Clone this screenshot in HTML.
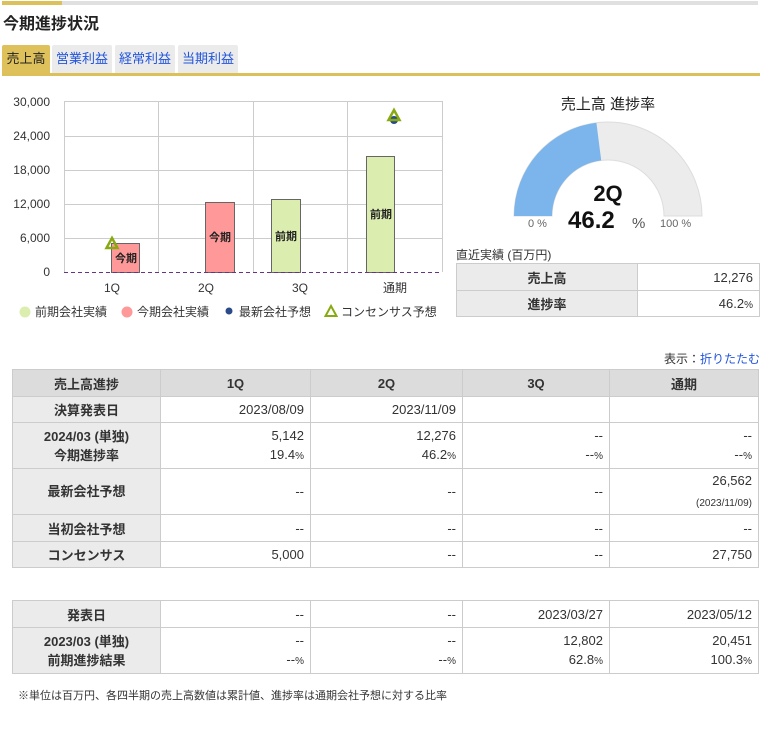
<!DOCTYPE html>
<html><head><meta charset="utf-8"><style>
body{margin:0;width:770px;height:736px;background:#fff;font-family:"Liberation Sans","Noto Sans CJK JP",sans-serif;color:#333;position:relative;overflow:hidden}
.a{position:absolute}
.tab{position:absolute;top:45px;height:28px;line-height:28px;font-size:13px;text-align:center;background:#ebebeb;color:#2255dd;border-radius:2px 2px 0 0}
table{border-collapse:collapse;position:absolute;font-size:13px}
td{border:1px solid #ccc;padding:0 6px;text-align:right;color:#333}
td.h{background:#ebebeb;text-align:center;font-weight:bold}
tr.hd td{background:#dcdcdc;text-align:center;font-weight:bold}
small{font-size:10px}
</style></head><body>
<div class="a" style="left:2px;top:1px;width:60px;height:4px;background:#dcc05a"></div>
<div class="a" style="left:62px;top:1px;width:696px;height:4px;background:#e0e0e0"></div>
<div class="a" style="left:3px;top:10px;font-size:16px;font-weight:bold;color:#222">今期進捗状況</div>
<div class="tab" style="left:2px;width:48px;background:#dfc15c;color:#222">売上高</div>
<div class="tab" style="left:52px;width:60px">営業利益</div>
<div class="tab" style="left:115px;width:60px">経常利益</div>
<div class="tab" style="left:178px;width:60px">当期利益</div>
<div class="a" style="left:2px;top:73px;width:758px;height:3px;background:#dcc05a"></div>

<svg class="a" style="left:0;top:0" width="450" height="330" font-family="Liberation Sans, Noto Sans CJK JP, sans-serif">
<g stroke="#ccc" stroke-width="1">
<line x1="64" y1="101.5" x2="442" y2="101.5"/><line x1="64" y1="136.5" x2="442" y2="136.5"/><line x1="64" y1="170.5" x2="442" y2="170.5"/><line x1="64" y1="204.5" x2="442" y2="204.5"/><line x1="64" y1="238.5" x2="442" y2="238.5"/>
<line x1="64.5" y1="101" x2="64.5" y2="272"/><line x1="158.5" y1="101" x2="158.5" y2="272"/><line x1="253.5" y1="101" x2="253.5" y2="272"/><line x1="347.5" y1="101" x2="347.5" y2="272"/><line x1="442.5" y1="101" x2="442.5" y2="272"/>
</g>
<g font-size="12" fill="#333" text-anchor="end">
<text x="50" y="106">30,000</text><text x="50" y="140">24,000</text><text x="50" y="174">18,000</text><text x="50" y="208">12,000</text><text x="50" y="242">6,000</text><text x="50" y="276">0</text>
</g>
<g stroke="#666" stroke-width="1">
<rect x="111.5" y="243.5" width="28" height="29" fill="#ff9999"/>
<rect x="205.5" y="202.5" width="29" height="70" fill="#ff9999"/>
<rect x="271.5" y="199.5" width="29" height="73" fill="#dcedb0"/>
<rect x="366.5" y="156.5" width="28" height="116" fill="#dcedb0"/>
</g>
<line x1="64" y1="272.5" x2="442" y2="272.5" stroke="#663388" stroke-dasharray="4,3"/>
<g font-size="11" font-weight="bold" fill="#222" text-anchor="middle">
<text x="126" y="262">今期</text><text x="220" y="241">今期</text><text x="286" y="240">前期</text><text x="381" y="218">前期</text>
</g>
<circle cx="394" cy="120" r="4" fill="#2a4a88"/>
<polygon points="112,238 106.5,248 117.5,248" fill="none" stroke="#88aa11" stroke-width="2.5"/>
<polygon points="394,110 388.5,120 399.5,120" fill="none" stroke="#88aa11" stroke-width="2.5"/>
<g font-size="12" fill="#333" text-anchor="middle">
<text x="112" y="292">1Q</text><text x="206" y="292">2Q</text><text x="300" y="292">3Q</text><text x="395" y="292">通期</text>
</g>
<g font-size="12" fill="#333">
<circle cx="25" cy="312" r="5.5" fill="#dcedb0"/><text x="35" y="316">前期会社実績</text>
<circle cx="127" cy="312" r="5.5" fill="#ff9999"/><text x="137" y="316">今期会社実績</text>
<circle cx="229" cy="311" r="3.5" fill="#2a4a88"/><text x="239" y="316">最新会社予想</text>
<polygon points="331,306 325.5,316 336.5,316" fill="none" stroke="#88aa11" stroke-width="2"/><text x="341" y="316">コンセンサス予想</text>
</g>
</svg>

<svg class="a" style="left:450px;top:80px" width="320" height="150" font-family="Liberation Sans, Noto Sans CJK JP, sans-serif">
<text x="158" y="29" font-size="15" text-anchor="middle" fill="#222">売上高 進捗率</text>
<path d="M64,136 A94,94 0 0 1 252,136 L214,136 A56,56 0 0 0 102,136 Z" fill="#ececec" stroke="#ddd"/>
<path d="M64,136 A94,94 0 0 1 146.4,42.7 L151.2,80.4 A56,56 0 0 0 102,136 Z" fill="#7cb4ec"/>
<text x="158" y="121" font-size="22" font-weight="bold" text-anchor="middle" fill="#111">2Q</text>
<text x="118" y="148" font-size="24" font-weight="bold" fill="#111">46.2</text>
<text x="182" y="148" font-size="15" fill="#555">%</text>
<text x="78" y="147" font-size="11" fill="#666">0 %</text>
<text x="210" y="147" font-size="11" fill="#666">100 %</text>
</svg>
<div class="a" style="left:456px;top:246px;font-size:12px">直近実績 (百万円)</div>
<table style="left:456px;top:263px;width:304px">
<tr style="height:27px"><td class="h" style="width:168px">売上高</td><td>12,276</td></tr>
<tr style="height:26px"><td class="h">進捗率</td><td>46.2<small>%</small></td></tr>
</table>
<div class="a" style="right:10px;top:350px;font-size:12px">表示：<span style="color:#2255dd">折りたたむ</span></div>

<table style="left:12px;top:369px;width:747px">
<tr class="hd" style="height:27px"><td style="width:135px">売上高進捗</td><td style="width:137px">1Q</td><td style="width:139px">2Q</td><td style="width:134px">3Q</td><td>通期</td></tr>
<tr style="height:26px"><td class="h">決算発表日</td><td>2023/08/09</td><td>2023/11/09</td><td></td><td></td></tr>
<tr style="height:46px;line-height:19px"><td class="h">2024/03 (単独)<br>今期進捗率</td><td>5,142<br>19.4<small>%</small></td><td>12,276<br>46.2<small>%</small></td><td>--<br>--<small>%</small></td><td>--<br>--<small>%</small></td></tr>
<tr style="height:46px;line-height:21px"><td class="h">最新会社予想</td><td>--</td><td>--</td><td>--</td><td>26,562<br><small>(2023/11/09)</small></td></tr>
<tr style="height:27px"><td class="h">当初会社予想</td><td>--</td><td>--</td><td>--</td><td>--</td></tr>
<tr style="height:26px"><td class="h">コンセンサス</td><td>5,000</td><td>--</td><td>--</td><td>27,750</td></tr>
</table>

<table style="left:12px;top:600px;width:747px">
<tr style="height:27px"><td class="h" style="width:135px">発表日</td><td style="width:137px">--</td><td style="width:139px">--</td><td style="width:134px">2023/03/27</td><td>2023/05/12</td></tr>
<tr style="height:46px;line-height:19px"><td class="h">2023/03 (単独)<br>前期進捗結果</td><td>--<br>--<small>%</small></td><td>--<br>--<small>%</small></td><td>12,802<br>62.8<small>%</small></td><td>20,451<br>100.3<small>%</small></td></tr>
</table>
<div class="a" style="left:18px;top:687px;font-size:11px">※単位は百万円、各四半期の売上高数値は累計値、進捗率は通期会社予想に対する比率</div>
</body></html>
